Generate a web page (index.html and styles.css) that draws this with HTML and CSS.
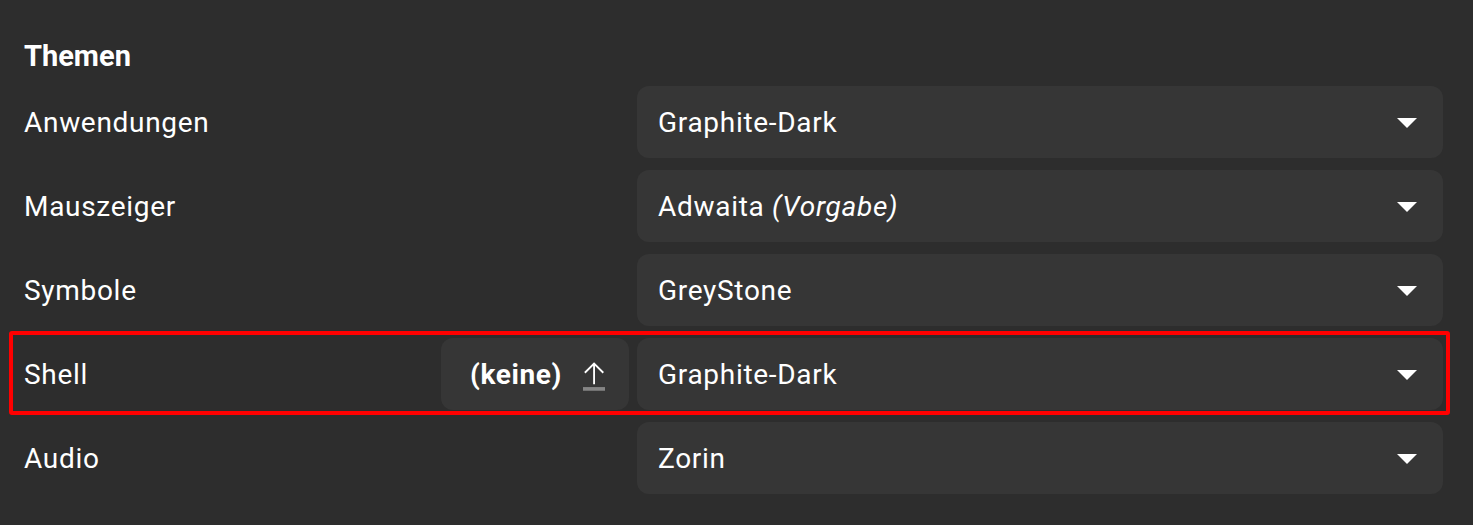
FILE: index.html
```html
<!DOCTYPE html>
<html lang="de">
<head>
<meta charset="utf-8">
<title>Themen</title>
<link rel="stylesheet" href="styles.css">
</head>
<body>
<div class="page">
  <h2 class="heading">Themen</h2>
  <div class="rows">
    <div class="row">
      <span class="label">Anwendungen</span>
      <div class="dropdown"><span class="value">Graphite-Dark</span><span class="caret"></span></div>
    </div>
    <div class="row">
      <span class="label">Mauszeiger</span>
      <div class="dropdown"><span class="value">Adwaita <em class="hint">(Vorgabe)</em></span><span class="caret"></span></div>
    </div>
    <div class="row">
      <span class="label">Symbole</span>
      <div class="dropdown"><span class="value">GreyStone</span><span class="caret"></span></div>
    </div>
    <div class="row row-marked">
      <span class="label">Shell</span>
      <div class="file-button">
        <span class="file-name">(keine)</span>
        <svg class="upload" width="24" height="32" viewBox="0 0 24 32">
          <path d="M12 25 V2.5 M2 12.5 L12 2.5 L22 12.5" fill="none" stroke="#ffffff" stroke-width="2"/>
          <rect x="0" y="28" width="24" height="4" fill="#858585"/>
        </svg>
      </div>
      <div class="dropdown"><span class="value">Graphite-Dark</span><span class="caret"></span></div>
      <div class="marker"></div>
    </div>
    <div class="row">
      <span class="label">Audio</span>
      <div class="dropdown"><span class="value">Zorin</span><span class="caret"></span></div>
    </div>
  </div>
</div>
</body>
</html>
```

FILE: styles.css
```css
html, body {
  margin: 0;
  padding: 0;
  background: #2d2d2d;
}

body {
  font-family: Roboto, "Noto Sans", sans-serif;
  color: #ffffff;
  width: 1473px;
  height: 525px;
  overflow: hidden;
}

.page {
  padding: 38px 30px 0 24px;
}

.heading {
  margin: 0 0 12px 0;
  font-size: 29px;
  line-height: 36px;
  font-weight: 700;
}

.rows {
  display: flex;
  flex-direction: column;
  gap: 12px;
}

.row {
  position: relative;
  display: flex;
  align-items: center;
  gap: 8px;
  height: 72px;
}

.label {
  flex: 1;
  font-size: 28px;
  line-height: normal;
  letter-spacing: 0.7px;
}

.dropdown {
  width: 806px;
  height: 72px;
  box-sizing: border-box;
  background: #363636;
  border-radius: 12px;
  display: flex;
  align-items: center;
  justify-content: space-between;
  padding: 0 26px 0 21px;
  font-size: 28px;
  letter-spacing: 0.7px;
}

.hint {
  font-style: italic;
}

.caret {
  width: 0;
  height: 0;
  border-left: 10px solid transparent;
  border-right: 10px solid transparent;
  border-top: 10px solid #ffffff;
  margin-top: 2px;
}

.file-button {
  width: 188px;
  height: 72px;
  box-sizing: border-box;
  background: #363636;
  border-radius: 12px;
  display: flex;
  align-items: center;
  padding: 0 24px 0 29px;
  gap: 21px;
}

.file-name {
  font-size: 28px;
  font-weight: 700;
  letter-spacing: 0.6px;
}

.upload {
  display: block;
  margin-top: 4px;
}

.marker {
  position: absolute;
  left: -15px;
  right: -7px;
  top: -7px;
  bottom: -5px;
  border: 4px solid #ff0000;
  border-radius: 3px;
  pointer-events: none;
}
```
